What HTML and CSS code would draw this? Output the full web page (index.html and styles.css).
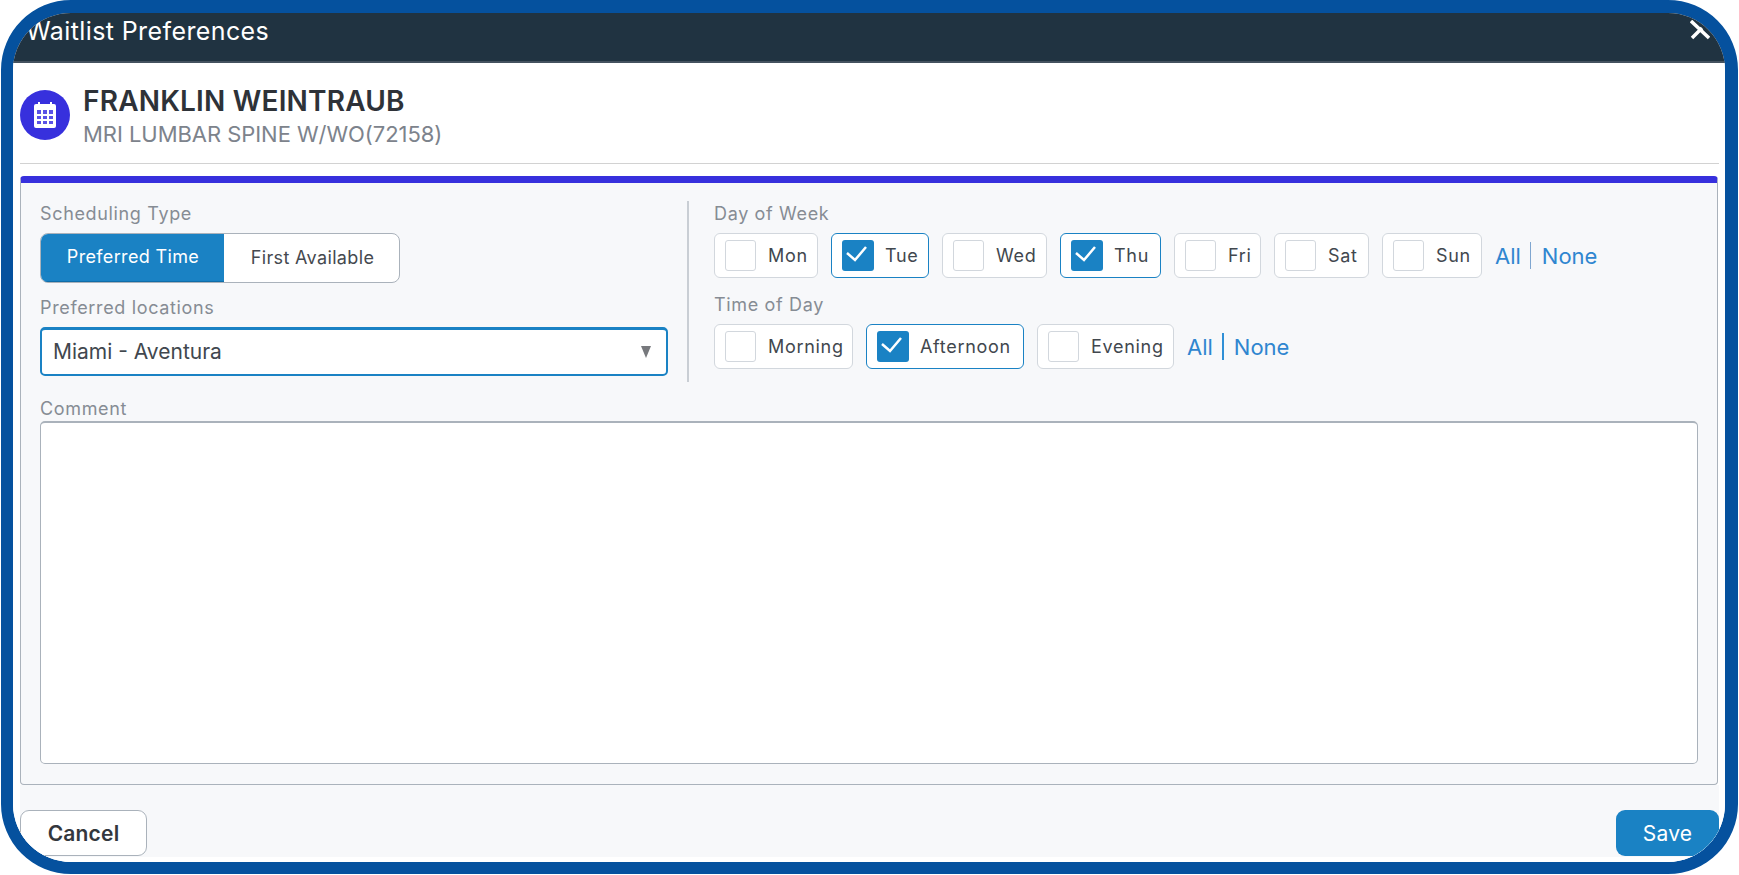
FILE: index.html
```html
<!DOCTYPE html>
<html lang="en">
<head>
    <meta charset="UTF-8">
    <title>Waitlist Preferences</title>
    <link rel="stylesheet" href="styles.css">
</head>
<body>
    <div class="frame">
        <div class="modal-header">
            <span class="modal-title">Waitlist Preferences</span>
            <svg class="close-icon" viewBox="0 0 20 20" width="20" height="20">
                <path d="M1 1 L19 18 M2 18 L12 8" stroke="#fff" stroke-width="3.5" fill="none"/>
            </svg>
        </div>
        <div class="modal-body">
            <div class="patient">
                <div class="avatar">
                    <svg viewBox="0 0 24 26" width="24" height="26">
                        <path d="M5 0h2v3H5zM17 0h2v3h-2z" fill="#fff"/>
                        <rect x="1" y="2" width="22" height="24" rx="2" fill="#fff"/>
                        <path d="M4 8h4v4H4zM10 8h4v4h-4zM16 8h4v4h-4zM4 14h4v3H4zM10 14h4v3h-4zM16 14h4v3h-4zM4 19h4v3H4zM10 19h4v3h-4zM16 19h4v3h-4z" fill="#5a52e6"/>
                    </svg>
                </div>
                <div>
                    <div class="patient-name">FRANKLIN WEINTRAUB</div>
                    <div class="patient-exam">MRI LUMBAR SPINE W/WO(72158)</div>
                </div>
            </div>

            <div class="panel">
                <div class="panel-row">
                    <div class="col-left">
                        <div class="field-label">Scheduling Type</div>
                        <div class="segment">
                            <div class="segment-item active">Preferred Time</div>
                            <div class="segment-item">First Available</div>
                        </div>
                        <div class="field-label label-locations">Preferred locations</div>
                        <div class="select">
                            <span>Miami - Aventura</span>
                            <span class="select-arrow"></span>
                        </div>
                    </div>
                    <div class="col-right">
                        <div class="field-label">Day of Week</div>
                        <div class="check-row">
                            <div class="check w-mon"><span class="box"></span>Mon</div>
                            <div class="check w-tue checked">
                                <span class="box"><svg viewBox="0 0 32 31"><path d="M5 13 L13 20 L24 7" stroke="#fff" stroke-width="2.5" fill="none"/></svg></span>Tue
                            </div>
                            <div class="check w-wed"><span class="box"></span>Wed</div>
                            <div class="check w-thu checked">
                                <span class="box"><svg viewBox="0 0 32 31"><path d="M5 13 L13 20 L24 7" stroke="#fff" stroke-width="2.5" fill="none"/></svg></span>Thu
                            </div>
                            <div class="check w-fri"><span class="box"></span>Fri</div>
                            <div class="check w-sat"><span class="box"></span>Sat</div>
                            <div class="check w-sun"><span class="box"></span>Sun</div>
                            <div class="links thin"><a>All</a><i></i><a>None</a></div>
                        </div>
                        <div class="field-label label-time">Time of Day</div>
                        <div class="check-row">
                            <div class="check w-morning"><span class="box"></span>Morning</div>
                            <div class="check w-afternoon checked">
                                <span class="box"><svg viewBox="0 0 32 31"><path d="M5 13 L13 20 L24 7" stroke="#fff" stroke-width="2.5" fill="none"/></svg></span>Afternoon
                            </div>
                            <div class="check w-evening"><span class="box"></span>Evening</div>
                            <div class="links"><a>All</a><i></i><a>None</a></div>
                        </div>
                    </div>
                </div>
                <div class="field-label label-comment">Comment</div>
                <textarea class="comment"></textarea>
            </div>

            <div class="modal-footer">
                <button class="btn btn-cancel">Cancel</button>
                <button class="btn btn-save">Save</button>
            </div>
        </div>
    </div>
</body>
</html>
```

FILE: styles.css
```css
:root {
    --blue: #1a82c4;
    --indigo: #3730dd;
    --line: #aab2bb;
    --soft: #d2d7dd;
    --panel: #f7f8fa;
}
html, body {
    margin: 0;
    height: 100%;
    background: #fff;
}
body {
    font-family: Inter, "Liberation Sans", sans-serif;
    padding: 0 1px;
    box-sizing: border-box;
}
.frame {
    height: 874px;
    box-sizing: border-box;
    border: 13px solid #05519e;
    border-left-width: 12px;
    border-bottom-width: 12px;
    border-radius: 70px;
    overflow: hidden;
    display: flex;
    flex-direction: column;
}
.modal-header {
    height: 50px;
    box-sizing: border-box;
    flex: none;
    background: #203341;
    border-bottom: 2px solid #44525f;
    display: flex;
    justify-content: space-between;
    padding: 3px 15px 0 13px;
}
.modal-title {
    color: #fff;
    font-size: 25px;
    line-height: 30px;
    letter-spacing: 0.4px;
}
.close-icon {
    margin-top: 4px;
}
.modal-body {
    flex: 1;
    padding: 0 6px 0 7px;
    display: flex;
    flex-direction: column;
    background: #fff;
}
.patient {
    height: 101px;
    flex: none;
    box-sizing: border-box;
    border-bottom: 1px solid #d2d2d2;
    display: flex;
    padding-top: 22px;
    gap: 13px;
}
.avatar {
    width: 50px;
    height: 50px;
    margin-top: 5px;
    border-radius: 50%;
    background: var(--indigo);
    display: flex;
    align-items: center;
    justify-content: center;
}
.patient-name {
    font-size: 28px;
    line-height: 32px;
    font-weight: 600;
    letter-spacing: 0.2px;
    color: #2e3238;
}
.patient-exam {
    font-size: 22px;
    line-height: 28px;
    margin-top: 3px;
    letter-spacing: -0.05px;
    color: #7d838c;
}
.panel {
    margin: 12px 1px 0 0;
    height: 609px;
    flex: none;
    box-sizing: border-box;
    background: var(--panel);
    border: 1px solid var(--line);
    border-top: 7px solid var(--indigo);
    border-radius: 4px;
    padding: 18px 19px 20px 19px;
    display: flex;
    flex-direction: column;
}
.panel-row {
    display: flex;
    height: 183px;
}
.col-left {
    width: 628px;
    padding-right: 19px;
    border-right: 2px solid #c9ced4;
}
.col-right {
    padding-left: 25px;
}
.field-label {
    font-size: 18px;
    line-height: 24px;
    padding-top: 1px;
    color: #868c94;
    letter-spacing: 0.65px;
}
.label-locations {
    margin-top: 12px;
}
.label-time {
    margin-top: 14px;
}
.label-comment {
    margin-top: 14px;
}
.segment {
    display: flex;
    margin-top: 7px;
    width: 360px;
    height: 50px;
    box-sizing: border-box;
    border: 1px solid var(--line);
    border-radius: 8px;
    overflow: hidden;
    background: #fff;
}
.segment-item {
    flex: 1;
    display: flex;
    align-items: center;
    justify-content: center;
    padding-left: 2px;
    padding-bottom: 1px;
    font-size: 18px;
    letter-spacing: 0.35px;
    color: #45494f;
}
.segment-item.active {
    flex: none;
    width: 182px;
    background: var(--blue);
    color: #fff;
    margin: -1px 0 -1px -1px;
    border-bottom: 2px solid #0f6da8;
}
.select {
    margin-top: 7px;
    height: 49px;
    box-sizing: border-box;
    border: 2px solid var(--blue);
    border-top-width: 3px;
    border-radius: 5px;
    background: #fff;
    padding: 0 15px 2px 11px;
    display: flex;
    align-items: center;
    justify-content: space-between;
    font-size: 21px;
    color: #41474e;
}
.select-arrow {
    width: 0;
    height: 0;
    margin-top: 2px;
    border-left: 5px solid transparent;
    border-right: 5px solid transparent;
    border-top: 12px solid #77797d;
}
.check-row {
    display: flex;
    align-items: center;
    gap: 13px;
    margin-top: 7px;
}
.check {
    height: 45px;
    box-sizing: border-box;
    flex: none;
    padding-left: 10px;
    border: 1px solid var(--soft);
    border-radius: 6px;
    background: #fff;
    display: flex;
    align-items: center;
    gap: 12px;
    font-size: 18px;
    letter-spacing: 0.7px;
    color: #41474e;
}
.check.checked {
    border-color: var(--blue);
}
.box {
    width: 31px;
    height: 31px;
    box-sizing: border-box;
    flex: none;
    border: 1px solid var(--soft);
    border-radius: 3px;
    background: #fff;
}
.checked .box {
    width: 32px;
    margin-right: -1px;
    border: none;
    background: var(--blue);
}
.box svg {
    display: block;
}
.w-mon { width: 104px; }
.w-tue { width: 98px; }
.w-wed { width: 105px; }
.w-thu { width: 101px; }
.w-fri { width: 87px; }
.w-sat { width: 95px; }
.w-sun { width: 100px; }
.w-morning { width: 139px; }
.w-afternoon { width: 158px; }
.w-evening { width: 137px; }
.links {
    display: flex;
    align-items: center;
    font-size: 22px;
    color: #2f86d0;
}
.links i {
    width: 2px;
    height: 27px;
    margin: 0 10px 0 9px;
    background: #2f8fd6;
}
.links.thin i {
    width: 1px;
    margin-right: 11px;
    background: #7fa6d0;
}
.comment {
    display: block;
    margin-top: 0;
    height: 343px;
    flex: none;
    box-sizing: border-box;
    border: 1px solid var(--line);
    border-top-width: 2px;
    border-radius: 5px;
    background: #fff;
    resize: none;
    outline: none;
}
.modal-footer {
    height: 72px;
    flex: none;
    box-sizing: border-box;
    padding-top: 25px;
    background: var(--panel);
    display: flex;
    justify-content: space-between;
}
.btn {
    height: 46px;
    border-radius: 9px;
    font-family: inherit;
    font-size: 21px;
    letter-spacing: 0.2px;
    cursor: pointer;
}
.btn-cancel {
    width: 127px;
    border: 1px solid var(--line);
    background: #fff;
    color: #33373d;
    font-weight: 600;
}
.btn-save {
    width: 103px;
    border: none;
    background: var(--blue);
    color: #fff;
}
```
